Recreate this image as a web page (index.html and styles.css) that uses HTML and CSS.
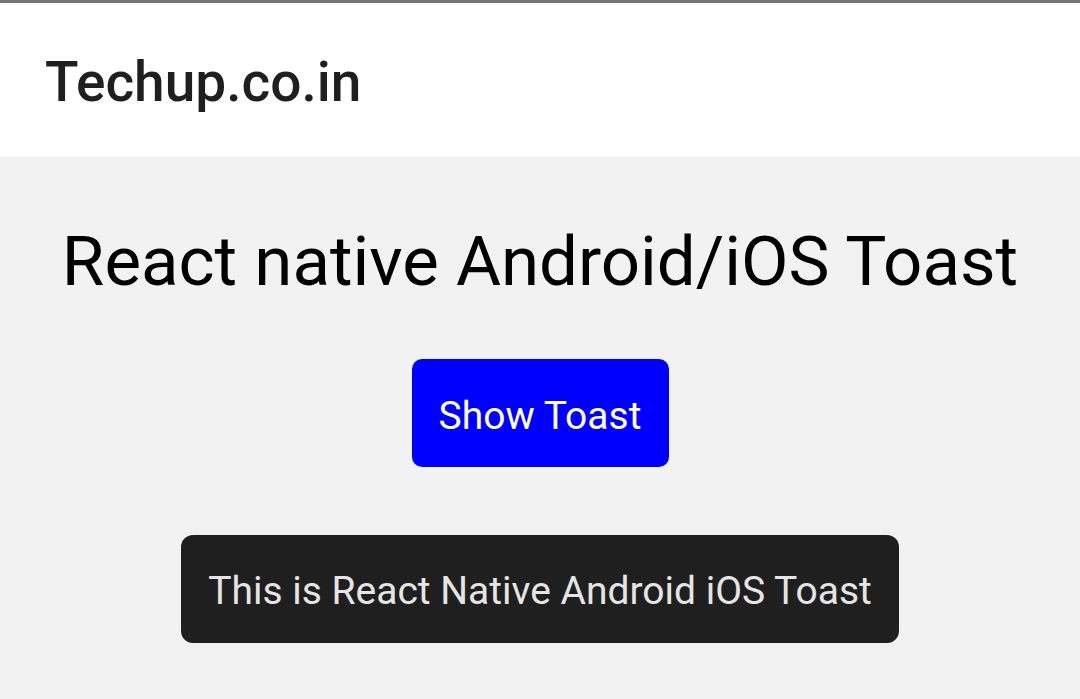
FILE: index.html
```html
<!DOCTYPE html>
<html>
<head>
<meta charset="utf-8">
<link rel="stylesheet" href="styles.css">
</head>
<body>
<div class="topline"></div>
<header class="appbar">
  <h1 class="brand">Techup.co.in</h1>
</header>
<main class="content">
  <h2 class="heading">React native Android/iOS Toast</h2>
  <button class="btn">Show Toast</button>
  <div class="toast">This is React Native Android iOS Toast</div>
</main>
</body>
</html>
```

FILE: styles.css
```css
html, body {
  margin: 0;
  padding: 0;
  height: 100%;
}
body {
  background: #f2f2f2;
  font-family: Roboto, "Liberation Sans", sans-serif;
  overflow: hidden;
}
.topline {
  height: 3px;
  background: #757575;
}
.appbar {
  background: #ffffff;
  height: 154px;
  display: flex;
  align-items: center;
  padding-left: 45px;
}
.brand {
  margin: 0;
  font-size: 55px;
  font-weight: 500;
  color: #1f1f1f;
  line-height: 1;
  padding-top: 4px;
}
.content {
  display: flex;
  flex-direction: column;
  align-items: center;
}
.heading {
  margin: 70px 0 0;
  font-size: 69px;
  font-weight: 400;
  color: #000000;
  line-height: 1;
}
.btn {
  margin-top: 63px;
  width: 257px;
  height: 108px;
  background: #0000ff;
  color: #ffffff;
  border: none;
  border-radius: 10px;
  font-family: Roboto, "Liberation Sans", sans-serif;
  font-size: 39px;
  padding: 6px 0 0;
}
.toast {
  margin-top: 68px;
  width: 718px;
  height: 108px;
  box-sizing: border-box;
  padding-top: 4px;
  background: #1f1f1f;
  color: #e5e5e5;
  border-radius: 12px;
  display: flex;
  align-items: center;
  justify-content: center;
  font-size: 39px;
}
```
